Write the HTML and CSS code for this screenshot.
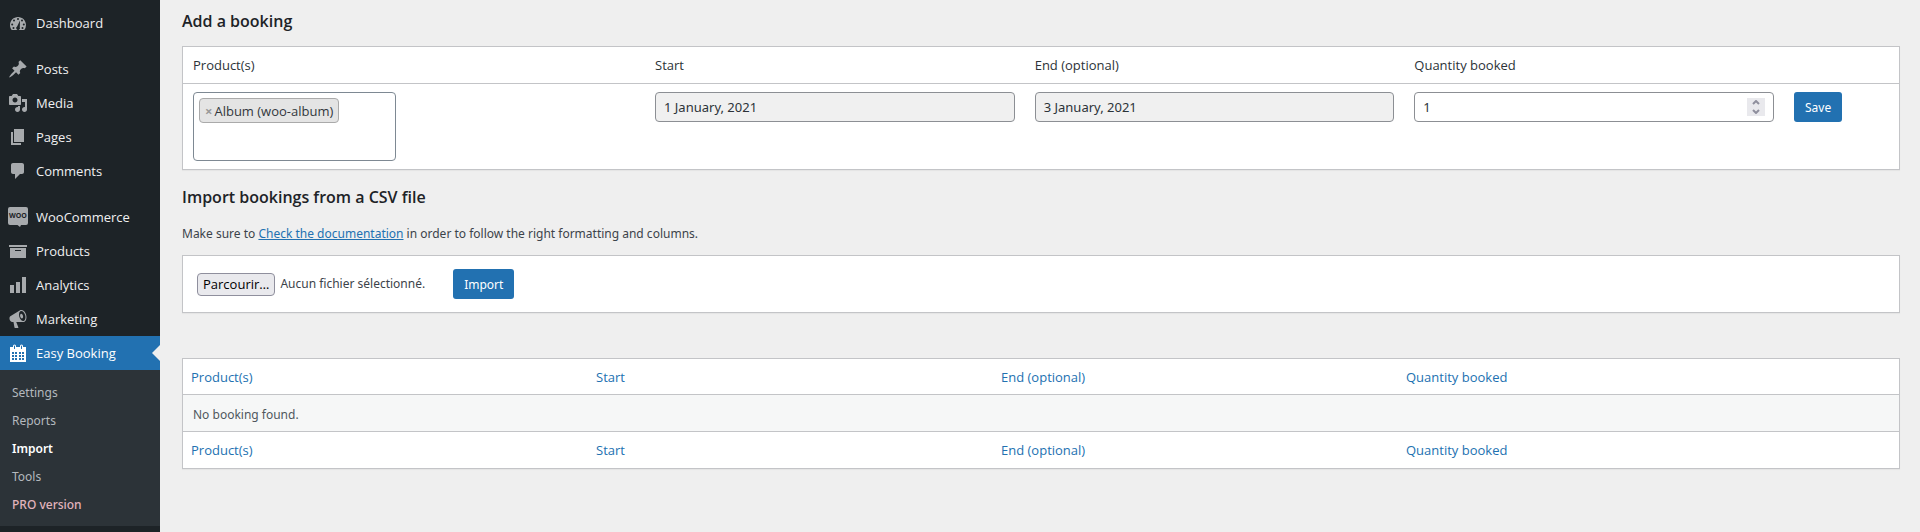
FILE: index.html
```html
<!DOCTYPE html>
<html lang="en">
<head>
    <meta charset="UTF-8">
    <meta name="viewport" content="width=device-width, initial-scale=1.0">
    <title>Easy Booking - Import</title>
    <link rel="stylesheet" href="styles.css">
</head>
<body>
    <nav class="admin-menu">
        <ul class="menu">
            <li>
                <a href="#"><svg class="icon" viewBox="0 0 20 20"><path fill-rule="evenodd" d="M3.760 17h12.480A7.980 7.980 0 0 0 18 12c0-4.410-3.580-8-8-8s-8 3.590-8 8c0 1.900.66 3.640 1.760 5zM10 5a1 1 0 1 1 0 2 1 1 0 0 1 0-2zM6 6.500a1 1 0 1 1 0 2 1 1 0 0 1 0-2zM14 6.500a1 1 0 1 1 0 2 1 1 0 0 1 0-2zM4.200 10.500a1 1 0 1 1 0 2 1 1 0 0 1 0-2zM15.800 10.500a1 1 0 1 1 0 2 1 1 0 0 1 0-2zM5.500 14a1 1 0 1 1 0 2 1 1 0 0 1 0-2zM14.500 14a1 1 0 1 1 0 2 1 1 0 0 1 0-2zM12 7.500l-.2 6.800a1.900 1.900 0 1 1-2.700-.8z"/></svg>Dashboard</a>
            </li>
            <li class="separator"></li>
            <li>
                <a href="#"><svg class="icon" viewBox="0 0 20 20"><path d="M10.440 3.020l1.820-1.820 6.360 6.350-1.830 1.820c-1.050-.68-2.480-.57-3.410.36l-.75.75c-.92.93-1.040 2.350-.35 3.410l-1.830 1.820-2.410-2.410-2.800 2.790c-.42.42-3.380 2.710-3.800 2.290s1.860-3.390 2.280-3.810l2.790-2.790L4.100 9.360l1.830-1.820c1.050.69 2.480.57 3.400-.36l.75-.75c.93-.92 1.050-2.350.36-3.410z"/></svg>Posts</a>
            </li>
            <li>
                <a href="#"><svg class="icon" viewBox="0 0 20 20"><path fill-rule="evenodd" d="M13 11V4c0-.55-.45-1-1-1h-1.670L9 1H5L3.670 3H2c-.55 0-1 .45-1 1v7c0 .55.45 1 1 1h10c.55 0 1-.45 1-1zM7 4.500c1.380 0 2.500 1.120 2.500 2.500S8.380 9.500 7 9.500 4.500 8.380 4.500 7 5.620 4.500 7 4.500zM14 6h5v10.500c0 1.380-1.120 2.500-2.500 2.500S14 17.880 14 16.500s1.120-2.500 2.500-2.500c.17 0 .34.02.5.05V9h-3V6zm-4 8.050V13h2v3.500c0 1.380-1.120 2.500-2.500 2.500S7 17.880 7 16.500 8.120 14 9.500 14c.17 0 .34.02.5.05z"/></svg>Media</a>
            </li>
            <li>
                <a href="#"><svg class="icon" viewBox="0 0 20 20"><path d="M6 15V2h10v13H6zm-1 1h8v2H3V5h2v11z"/></svg>Pages</a>
            </li>
            <li>
                <a href="#"><svg class="icon" viewBox="0 0 20 20"><path d="M5 2h9c1.100 0 2 .9 2 2v7c0 1.100-.9 2-2 2h-2l-5 5v-5H5c-1.100 0-2-.9-2-2V4c0-1.100.9-2 2-2z"/></svg>Comments</a>
            </li>
            <li class="separator"></li>
            <li>
                <a href="#"><svg class="icon" viewBox="0 0 20 20"><path d="M2 0h16a2 2 0 0 1 2 2v14a2 2 0 0 1-2 2h-5l-1 2-2.500-2H2a2 2 0 0 1-2-2V2a2 2 0 0 1 2-2z"/><text class="woo" x="10" y="11" text-anchor="middle">WOO</text></svg>WooCommerce</a>
            </li>
            <li>
                <a href="#"><svg class="icon" viewBox="0 0 20 20"><path fill-rule="evenodd" d="M19 4v2H1V4h18zM2 7h16v10H2V7zm11 3V9H7v1h6z"/></svg>Products</a>
            </li>
            <li>
                <a href="#"><svg class="icon" viewBox="0 0 20 20"><path d="M18 18V2h-4v16h4zm-6 0V7H8v11h4zm-6 0v-8H2v8h4z"/></svg>Analytics</a>
            </li>
            <li>
                <a href="#"><svg class="icon" viewBox="0 0 20 20"><path fill-rule="evenodd" d="M18.150 5.940c.46 1.620.38 3.220-.02 4.480-.42 1.280-1.260 2.180-2.300 2.480-.16.06-.26.06-.4.06-.06.02-.12.02-.18.02-.06.02-.14.02-.22.02h-6.800l2.220 5.500c.02.14-.06.26-.14.34-.08.1-.24.16-.34.16H6.950c-.1 0-.26-.06-.34-.16-.08-.08-.16-.2-.14-.34l-1-5.500H4.250l-.02-.02c-.5.06-1.080-.18-1.540-.62s-.88-1.080-1.060-1.880c-.24-.8-.2-1.560-.02-2.200.18-.62.58-1.080 1.060-1.300l.02-.02 9-5.400c.1-.06.18-.1.24-.16.06-.04.14-.08.24-.12.16-.08.28-.12.5-.18 1.040-.3 2.240.1 3.220.98s1.840 2.240 2.260 3.860zm-2.580 5.980h-.02c.4-.1.74-.34 1.040-.7.58-.7.86-1.760.86-3.040 0-.64-.1-1.300-.28-1.980-.34-1.360-1.020-2.500-1.780-3.240s-1.680-1.100-2.460-.88c-.82.22-1.400.96-1.700 2-.32 1.040-.28 2.360.06 3.720.38 1.360 1 2.500 1.800 3.240.78.74 1.620 1.100 2.480.88zm-2.540-7.080c.22-.04.42-.02.62.04.38.16.76.48 1.020 1s.42 1.200.42 1.780c0 .3-.04.56-.12.8-.18.48-.44.84-.86.94-.34.1-.8-.06-1.140-.4s-.64-.86-.78-1.500c-.18-.62-.12-1.240.02-1.720s.48-.84.82-.94z"/></svg>Marketing</a>
            </li>
            <li class="current">
                <a href="#"><svg class="icon" viewBox="0 0 20 20"><path fill-rule="evenodd" d="M15 4h3v15H2V4h3V3a1.500 1.500 0 0 1 3 0v1h4V3a1.500 1.500 0 0 1 3 0v1zM6 3v2.500a.5.5 0 0 0 1 0V3a.5.5 0 0 0-1 0zm7 0v2.500a.5.5 0 0 0 1 0V3a.5.5 0 0 0-1 0zM4 9h2v2H4zM7 9h2v2H7zM11 9h2v2h-2zM14 9h2v2h-2zM4 12h2v2H4zM7 12h2v2H7zM11 12h2v2h-2zM14 12h2v2h-2zM4 15h2v2H4zM7 15h2v2H7zM11 15h2v2h-2zM14 15h2v2h-2z"/></svg>Easy Booking</a>
                <ul class="submenu">
                    <li><a href="#">Settings</a></li>
                    <li><a href="#">Reports</a></li>
                    <li><a href="#" class="active">Import</a></li>
                    <li><a href="#">Tools</a></li>
                    <li><a href="#" class="pro">PRO version</a></li>
                </ul>
            </li>
        </ul>
    </nav>

    <main class="content">
        <h2>Add a booking</h2>
        <form>
            <table class="panel add-booking">
                <thead>
                    <tr>
                        <th class="col-product"><label for="product">Product(s)</label></th>
                        <th><label for="start">Start</label></th>
                        <th><label for="end">End (optional)</label></th>
                        <th><label for="quantity">Quantity booked</label></th>
                        <th class="col-save"></th>
                    </tr>
                </thead>
                <tbody>
                    <tr>
                        <td>
                            <div class="product-select">
                                <span class="tag"><button type="button" aria-label="Remove">×</button>Album (woo-album)</span>
                                <input type="text" id="product">
                            </div>
                        </td>
                        <td><input type="text" class="field" id="start" value="1 January, 2021" readonly></td>
                        <td><input type="text" class="field" id="end" value="3 January, 2021" readonly></td>
                        <td>
                            <div class="field quantity">
                                <input type="number" id="quantity" value="1" min="1">
                                <div class="spinner">
                                    <button type="button" aria-label="Increase"><svg viewBox="0 0 8 5"><path d="M1 4l3-3 3 3"/></svg></button>
                                    <button type="button" aria-label="Decrease"><svg viewBox="0 0 8 5"><path d="M1 1l3 3 3-3"/></svg></button>
                                </div>
                            </div>
                        </td>
                        <td><button type="submit" class="button">Save</button></td>
                    </tr>
                </tbody>
            </table>
        </form>

        <h2>Import bookings from a CSV file</h2>
        <p>Make sure to <a href="#">Check the documentation</a> in order to follow the right formatting and columns.</p>
        <form class="panel import-form">
            <input type="file" id="csv-file" class="file-input">
            <label for="csv-file" class="browse">Parcourir…</label>
            <span class="file-name">Aucun fichier sélectionné.</span>
            <button type="submit" class="button">Import</button>
        </form>

        <table class="panel bookings">
            <thead>
                <tr>
                    <th><a href="#">Product(s)</a></th>
                    <th><a href="#">Start</a></th>
                    <th><a href="#">End (optional)</a></th>
                    <th><a href="#">Quantity booked</a></th>
                    <th class="col-actions"></th>
                </tr>
            </thead>
            <tbody>
                <tr>
                    <td colspan="5">No booking found.</td>
                </tr>
            </tbody>
            <tfoot>
                <tr>
                    <th><a href="#">Product(s)</a></th>
                    <th><a href="#">Start</a></th>
                    <th><a href="#">End (optional)</a></th>
                    <th><a href="#">Quantity booked</a></th>
                    <th></th>
                </tr>
            </tfoot>
        </table>
    </main>
</body>
</html>
```
FILE: styles.css
```css
* {
    box-sizing: border-box;
}
body {
    display: flex;
    min-height: 100vh;
    margin: 0;
    background-color: #efefef;
    color: #3c434a;
    font-family: "Noto Sans", "Open Sans", sans-serif;
    font-size: 12px;
    line-height: 18px;
}
input, button {
    font-family: inherit;
}

/* Admin menu */
.admin-menu {
    flex: 0 0 160px;
    background-color: #1d2327;
}
.menu, .submenu {
    margin: 0;
    padding: 0;
    list-style: none;
}
.menu {
    padding-top: 6px;
}
.menu a {
    display: flex;
    align-items: center;
    gap: 8px;
    height: 34px;
    padding-left: 8px;
    color: #f0f0f1;
    font-family: "Open Sans", sans-serif;
    font-size: 13px;
    text-decoration: none;
}
.icon {
    width: 20px;
    height: 20px;
    fill: #a7aaad;
}
.woo {
    fill: #1d2327;
    font-size: 7px;
    font-weight: bold;
}
.separator {
    height: 12px;
}
.current {
    position: relative;
}
.current > a {
    background-color: #2271b1;
    color: #fff;
}
.current .icon {
    fill: #fff;
}
.current::after {
    content: "";
    position: absolute;
    top: 9px;
    right: 0;
    border: 8px solid transparent;
    border-left: 0;
    border-right-color: #efefef;
}
.submenu {
    padding: 9px 0 7px;
    background-color: #2c3338;
}
.submenu a {
    height: 28px;
    padding-left: 12px;
    color: #b4b9be;
    font-family: "Noto Sans", sans-serif;
    font-size: 12px;
}
.submenu .active {
    color: #fff;
    font-weight: 600;
}
.submenu .pro {
    color: #e2b3bd;
    font-weight: 500;
}

/* Page */
.content {
    flex: 1;
    padding: 9px 20px 0 22px;
}
h2 {
    margin: 0 0 13px;
    color: #1d2327;
    font-family: "Open Sans", sans-serif;
    font-size: 16px;
    font-weight: 600;
    line-height: 24px;
}
p {
    margin: 16px 0 12px;
}
a {
    color: #2271b1;
}
.panel {
    width: 100%;
    background-color: #fff;
    border: 1px solid #c3c4c7;
    box-shadow: 0 1px 1px rgba(0, 0, 0, 0.04);
}
table {
    table-layout: fixed;
    border-spacing: 0;
}
th {
    font-family: "Open Sans", sans-serif;
    font-size: 13px;
    font-weight: 400;
    text-align: left;
}
td {
    vertical-align: top;
}
.button {
    height: 30px;
    padding: 0 11px;
    background-color: #2271b1;
    color: #fff;
    border: none;
    border-radius: 3px;
    font-size: 12px;
    cursor: pointer;
}
.button:hover {
    background-color: #135e96;
}

/* Add a booking */
.add-booking {
    margin-bottom: 15px;
}
.add-booking th {
    height: 37px;
    padding: 0 10px;
    color: #2c3338;
    border-bottom: 1px solid #c3c4c7;
}
.add-booking td {
    padding: 8px 10px;
}
.add-booking .col-product {
    width: 462px;
}
.add-booking .col-save {
    width: 115px;
}
.product-select {
    width: 203px;
    height: 69px;
    padding: 5px;
    border: 1px solid #7e8993;
    border-radius: 4px;
}
.product-select input {
    width: 100%;
    border: none;
    outline: none;
}
.tag {
    display: inline-flex;
    align-items: center;
    height: 25px;
    padding: 0 5px;
    background-color: #e4e4e4;
    color: #32373c;
    border: 1px solid #aaa;
    border-radius: 4px;
    font-family: "Open Sans", sans-serif;
    font-size: 13px;
}
.tag button {
    padding: 0 2px 0 0;
    background: none;
    color: #999;
    border: none;
    font-size: 13px;
    font-weight: bold;
    cursor: pointer;
}
.field {
    width: 100%;
    height: 30px;
    padding: 0 8px;
    background-color: #fff;
    color: #2c3338;
    border: 1px solid #8c8f94;
    border-radius: 4px;
    font-size: 13px;
}
.field:read-only:not(.quantity) {
    background-color: #f0f0f0;
}
.quantity {
    display: flex;
    align-items: center;
}
.quantity input {
    flex: 1;
    min-width: 0;
    padding: 0;
    color: inherit;
    border: none;
    outline: none;
    font-size: 13px;
    appearance: textfield;
}
.quantity input::-webkit-inner-spin-button {
    appearance: none;
}
.spinner {
    display: flex;
    flex-direction: column;
    width: 18px;
    height: 18px;
    background-color: #e9e9ed;
}
.spinner button {
    display: flex;
    flex: 1;
    align-items: center;
    justify-content: center;
    padding: 0;
    background: none;
    border: none;
}
.spinner svg {
    width: 8px;
    height: 5px;
    fill: none;
    stroke: #8f8f9d;
    stroke-width: 2;
}

/* CSV import */
.import-form {
    display: flex;
    align-items: center;
    margin-bottom: 45px;
    padding: 13px 14px;
}
.file-input {
    position: absolute;
    width: 1px;
    height: 1px;
    opacity: 0;
}
.browse {
    padding: 1px 5px;
    background-color: #e9e9ed;
    color: #000;
    border: 1px solid #8f8f9d;
    border-radius: 4px;
    font-family: "Open Sans", sans-serif;
    font-size: 13px;
    line-height: 19px;
}
.file-name {
    margin: 0 28px 0 5px;
}

/* Bookings list */
.bookings th {
    height: 36px;
    padding: 0 8px;
}
.bookings thead th {
    height: 35px;
}
.bookings th a {
    text-decoration: none;
}
.bookings td {
    height: 38px;
    padding: 3px 10px 0;
    background-color: #f6f7f7;
    color: #50575e;
    border: solid #c3c4c7;
    border-width: 1px 0;
    vertical-align: middle;
}
.bookings .col-actions {
    width: 96px;
}
```
